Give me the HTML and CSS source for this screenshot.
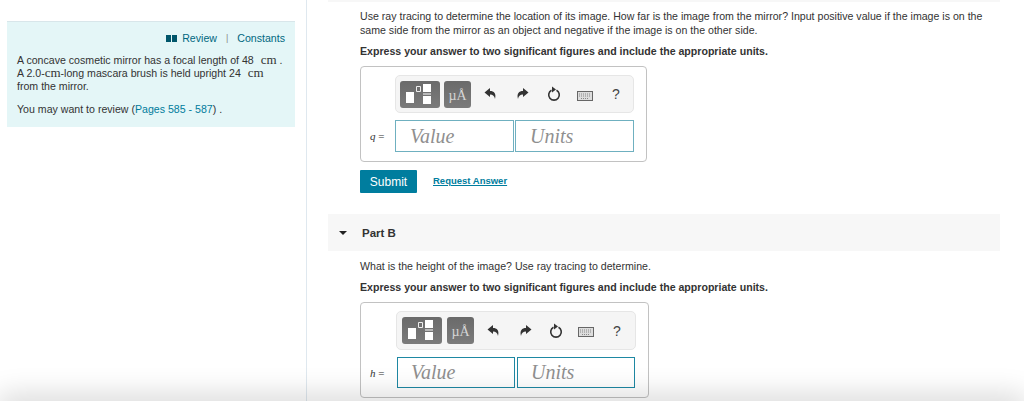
FILE: index.html
```html
<!DOCTYPE html>
<html lang="en">
<head>
    <meta charset="UTF-8">
    <meta name="viewport" content="width=device-width, initial-scale=1.0">
    <title>Part A</title>
    <link rel="stylesheet" href="styles.css">
</head>
<body>
    <div class="page">
        <div class="sidebar">
            <div class="info-box">
                <div class="info-links">
                    <svg class="book-icon" width="11" height="7" viewBox="0 0 11 7"><path d="M0 0h5v7H0zM6 0h5v7H6z"/></svg>
                    <a href="#">Review</a>
                    <span class="divider">|</span>
                    <a href="#">Constants</a>
                </div>
                <p>A concave cosmetic mirror has a focal length of 48 <span class="unit">cm</span> .<br>A 2.0-<span class="unit-tight">cm</span>-long mascara brush is held upright 24 <span class="unit">cm</span><br>from the mirror.</p>
                <p>You may want to review (<a class="page-link" href="#">Pages 585 - 587</a>) .</p>
            </div>
        </div>
        <div class="main">
            <div class="top-band"></div>
            <div class="part">
                <p class="question">Use ray tracing to determine the location of its image. How far is the image from the mirror? Input positive value if the image is on the same side from the mirror as an object and negative if the image is on the other side.</p>
                <p class="express">Express your answer to two significant figures and include the appropriate units.</p>
                <div class="answer-box">
                    <div class="toolbar">
                        <span class="tool-btn tool-template">
                            <svg width="40" height="27" viewBox="0 0 40 27"><path fill="#fff" d="M6 11h8v11H6zM23 3h8v8h-8zM23 12.500h8v1h-8zM23 15h8v8h-8z"/><path fill="none" stroke="#eee" d="M16.500 5.500h4v5h-4z"/></svg>
                        </span>
                        <span class="tool-btn tool-units">&micro;&Aring;</span>
                        <svg class="tool-icon tool-undo" width="14" height="14" viewBox="0 0 14 14"><path fill="#333" d="M.5 5.500L6 1v3c4 0 6.500 2.500 5 8C10.500 9 9 7.500 6 7.500V10z"/></svg>
                        <svg class="tool-icon tool-redo" width="14" height="14" viewBox="0 0 14 14"><path fill="#333" d="M13.500 5.500L8 1v3C4 4 1.500 6.500 3 12 3.500 9 5 7.500 8 7.500V10z"/></svg>
                        <svg class="tool-icon tool-reset" width="14" height="16" viewBox="0 0 14 16"><path fill="none" stroke="#333" stroke-width="1.600" d="M9.500 4.200a5.300 5.300 0 1 1-5 0"/><path fill="#333" d="M5 .5v6L9 3.500z"/></svg>
                        <svg class="tool-icon tool-keys" width="16" height="10" viewBox="0 0 16 10"><rect x=".5" y=".5" width="15" height="9" fill="#ddd" stroke="#666"/><path stroke="#888" stroke-dasharray="1 1" d="M2 3h12M2 5h12M4 7.500h8"/></svg>
                        <span class="tool-help">?</span>
                    </div>
                    <div class="answer-row">
                        <span class="var-label"><i>q</i> =</span>
                        <span class="field">Value</span>
                        <span class="field">Units</span>
                    </div>
                </div>
                <div class="actions">
                    <button class="submit">Submit</button>
                    <a class="request" href="#">Request Answer</a>
                </div>
            </div>
            <div class="part-header">
                <span class="caret"></span>
                <span>Part B</span>
            </div>
            <div class="part part-b">
                <p class="question">What is the height of the image? Use ray tracing to determine.</p>
                <p class="express">Express your answer to two significant figures and include the appropriate units.</p>
                <div class="answer-box">
                    <div class="toolbar">
                        <span class="tool-btn tool-template">
                            <svg width="40" height="27" viewBox="0 0 40 27"><path fill="#fff" d="M6 11h8v11H6zM23 3h8v8h-8zM23 12.500h8v1h-8zM23 15h8v8h-8z"/><path fill="none" stroke="#eee" d="M16.500 5.500h4v5h-4z"/></svg>
                        </span>
                        <span class="tool-btn tool-units">&micro;&Aring;</span>
                        <svg class="tool-icon tool-undo" width="14" height="14" viewBox="0 0 14 14"><path fill="#333" d="M.5 5.500L6 1v3c4 0 6.500 2.500 5 8C10.500 9 9 7.500 6 7.500V10z"/></svg>
                        <svg class="tool-icon tool-redo" width="14" height="14" viewBox="0 0 14 14"><path fill="#333" d="M13.500 5.500L8 1v3C4 4 1.500 6.500 3 12 3.500 9 5 7.500 8 7.500V10z"/></svg>
                        <svg class="tool-icon tool-reset" width="14" height="16" viewBox="0 0 14 16"><path fill="none" stroke="#333" stroke-width="1.600" d="M9.500 4.200a5.300 5.300 0 1 1-5 0"/><path fill="#333" d="M5 .5v6L9 3.500z"/></svg>
                        <svg class="tool-icon tool-keys" width="16" height="10" viewBox="0 0 16 10"><rect x=".5" y=".5" width="15" height="9" fill="#ddd" stroke="#666"/><path stroke="#888" stroke-dasharray="1 1" d="M2 3h12M2 5h12M4 7.500h8"/></svg>
                        <span class="tool-help">?</span>
                    </div>
                    <div class="answer-row">
                        <span class="var-label"><i>h</i> =</span>
                        <span class="field">Value</span>
                        <span class="field">Units</span>
                    </div>
                </div>
            </div>
        </div>
    </div>
    <div class="bottom-shade"></div>
</body>
</html>
```

FILE: styles.css
```css
html, body {
    height: 401px;
    overflow: hidden;
}
body {
    font-family: "Liberation Sans", Arial, sans-serif;
    font-size: 10.6px;
    line-height: 14px;
    color: #333;
    background-color: #fff;
    margin: 0;
}
p {
    margin: 0;
}
a {
    text-decoration: none;
}
.page {
    display: flex;
    height: 401px;
}
.sidebar {
    width: 307px;
    flex: none;
    box-sizing: border-box;
    border-right: 1px solid #dfe8ef;
    padding: 21px 11px 0 7px;
}
.info-box {
    height: 106px;
    box-sizing: border-box;
    background-color: #e4f6f7;
    border-top: 1px solid #d8e6ea;
    padding: 10px 10px 0 10px;
    line-height: 13px;
}
.info-box p {
    margin-bottom: 10px;
}
.info-links {
    display: flex;
    justify-content: flex-end;
    align-items: center;
    gap: 4px;
    margin: 0 0 9px;
    height: 13px;
}
.info-links a {
    color: #00677f;
}
.book-icon {
    fill: #00566b;
    margin-right: 1px;
}
.divider {
    color: #888;
    margin: 0 5px;
    font-size: 9px;
}
.unit, .unit-tight {
    font-family: "Liberation Serif", serif;
    font-size: 13px;
    line-height: 0;
}
.unit {
    margin-left: 4px;
}
.page-link {
    color: #007b9c;
}
.main {
    flex: 1;
    padding-right: 24px;
    min-width: 0;
}
.top-band {
    height: 2px;
    background-color: #f7f7f7;
    margin-left: 21px;
}
.part {
    padding: 7px 16px 0 53px;
}
.question {
    margin-bottom: 7px;
}
.express {
    font-weight: bold;
}
.answer-box {
    width: 287px;
    height: 96px;
    box-sizing: border-box;
    margin-top: 8px;
    border: 1px solid #c2c2c2;
    border-radius: 4px;
    padding: 8px 12px 0 34px;
}
.toolbar {
    height: 38px;
    box-sizing: border-box;
    display: flex;
    align-items: center;
    background-color: #f5f5f5;
    border: 1px solid #e6e6e6;
    border-radius: 5px;
    padding: 0 4px;
}
.tool-btn {
    display: flex;
    align-items: center;
    justify-content: center;
    height: 27px;
    border-radius: 3px;
    background: linear-gradient(#6a6a6a, #7b7b7b);
    color: #d5d5d5;
    font-family: "Liberation Serif", serif;
}
.tool-template {
    width: 40px;
    margin-right: 4px;
}
.tool-units {
    width: 27px;
    font-size: 14px;
    box-sizing: border-box;
    padding-top: 3px;
}
.tool-icon {
    flex: none;
}
.tool-undo {
    margin-left: 13px;
}
.tool-redo {
    margin-left: 17px;
}
.tool-reset {
    margin-left: 18px;
}
.tool-keys {
    margin-left: 16px;
    margin-top: 3px;
}
.tool-help {
    font-size: 14px;
    margin-left: 19px;
    color: #444;
}
.answer-row {
    display: flex;
    align-items: center;
    margin: 7px 0 0 -34px;
}
.var-label {
    width: 34px;
    flex: none;
    padding-left: 9px;
    box-sizing: border-box;
    font-family: "Liberation Serif", serif;
    font-size: 11px;
}
.field {
    width: 119px;
    height: 32px;
    flex: none;
    box-sizing: border-box;
    border: 1px solid #6fb0c0;
    margin-right: 1px;
    padding-left: 14px;
    font-family: "Liberation Serif", serif;
    font-style: italic;
    font-size: 20px;
    line-height: 31px;
    color: #8f8f8f;
}
.actions {
    display: flex;
    align-items: center;
    gap: 16px;
    margin-top: 8px;
}
.submit {
    width: 57px;
    height: 23px;
    border: none;
    border-radius: 1px;
    background-color: #007d9e;
    color: #fff;
    font-family: "Liberation Sans", Arial, sans-serif;
    font-size: 12px;
    padding: 0;
}
.request {
    color: #007d9e;
    font-size: 9.5px;
    font-weight: bold;
    text-decoration: underline;
    margin-bottom: 1px;
}
.part-header {
    display: flex;
    align-items: center;
    height: 37px;
    margin: 21px 0 0 21px;
    padding-left: 11px;
    background-color: #f7f7f7;
    font-weight: bold;
    font-size: 11.5px;
    color: #333;
}
.caret {
    width: 0;
    height: 0;
    border-left: 4.5px solid transparent;
    border-right: 4.5px solid transparent;
    border-top: 4.5px solid #222;
    margin-right: 15px;
}
.part-b {
    padding-top: 8px;
}
.part-b .answer-box {
    width: 289px;
    padding: 8px 12px 0 35px;
}
.part-b .toolbar {
    height: 39px;
    padding-left: 5px;
}
.part-b .tool-template {
    margin-right: 5px;
}
.part-b .tool-reset {
    margin-left: 17px;
}
.part-b .tool-keys {
    margin-left: 15px;
}
.part-b .answer-row {
    margin-left: -35px;
}
.part-b .var-label {
    width: 36px;
}
.part-b .field {
    width: 118px;
    height: 31px;
    margin-right: 2px;
    padding-left: 13px;
    line-height: 29px;
    border-color: #1e88a3;
}
.bottom-shade {
    position: absolute;
    left: 0;
    right: 0;
    bottom: -20px;
    height: 20px;
    box-shadow: 0 -2px 28px 5px rgba(0, 0, 0, 0.15);
    border-radius: 50px;
}
```
